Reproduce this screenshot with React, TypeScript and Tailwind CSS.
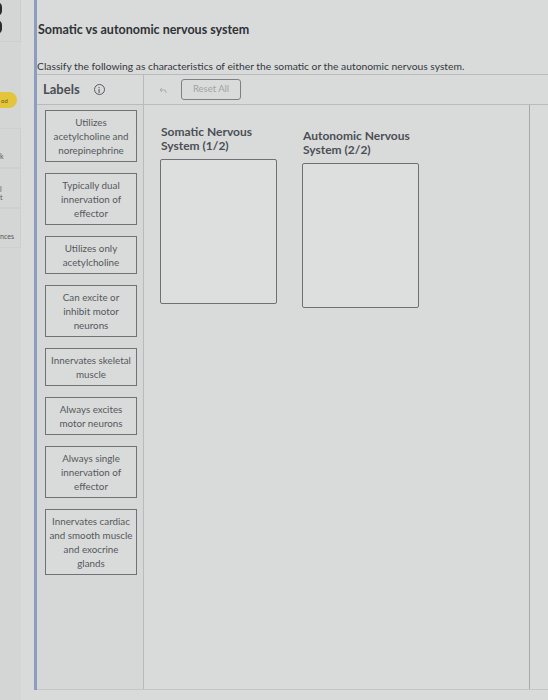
import { ReactNode } from "react";

const labels: string[][] = [
  ["Utilizes", "acetylcholine and", "norepinephrine"],
  ["Typically dual", "innervation of", "effector"],
  ["Utilizes only", "acetylcholine"],
  ["Can excite or", "inhibit motor", "neurons"],
  ["Innervates skeletal", "muscle"],
  ["Always excites", "motor neurons"],
  ["Always single", "innervation of", "effector"],
  ["Innervates cardiac", "and smooth muscle", "and exocrine", "glands"],
];

const font = { fontFamily: "Lato, 'Open Sans', sans-serif" };

function SideCell({ children, className = "" }: { children?: ReactNode; className?: string }) {
  return (
    <div className={`border-y border-r border-[#cdcfce] h-[40px] flex items-end pb-[6px] text-[7px] text-[#555] ${className}`}>
      {children}
    </div>
  );
}

function DropZone({ title, offset }: { title: string[]; offset: string }) {
  return (
    <div className={`flex flex-col ${offset}`}>
      <div className="text-[12px] font-bold leading-[14px] text-[#4b4f55] pl-[1px] h-[34px]">
        {title.map((t) => (
          <div key={t}>{t}</div>
        ))}
      </div>
      <div className="w-[117px] h-[145px] border border-[#6e7173] rounded-[2px] bg-[#dcdfde]" />
    </div>
  );
}

export default function App() {
  return (
    <div className="h-[700px] w-[548px] overflow-hidden flex bg-[#d9dbda]" style={font}>
      {/* left app sidebar, mostly cut off */}
      <div className="w-[21px] flex flex-col shrink-0 bg-[#d4d6d5]">
        <div className="h-[42px] border-b border-r border-[#cdcfce] relative">
          <div className="absolute -left-[8px] top-[2px] w-[10px] h-[14px] rounded-full bg-[#2b2b2b]" />
          <div className="absolute -left-[8px] top-[20px] w-[10px] h-[14px] rounded-full bg-[#2b2b2b]" />
        </div>
        <div className="h-[50px]" />
        <div className="h-[16px] w-[17px] rounded-r-full bg-[#e2c53a] text-[6px] text-[#6a5a10] flex items-center pl-[1px]">
          od
        </div>
        <div className="h-[20px]" />
        <SideCell>k</SideCell>
        <SideCell className="flex-col !items-start justify-end leading-[8px]">
          <span>l</span>
          <span>t</span>
        </SideCell>
        <SideCell className="text-[6px]">nces</SideCell>
      </div>

      <div className="w-[13px] shrink-0" />
      <div className="w-[3px] h-[690px] bg-[#8d9dbd] shrink-0" />

      <div className="flex-1 flex flex-col h-[690px] border-b border-[#c4c6c5]">
        <h1 className="text-[12.5px] font-bold text-[#2f3237] pt-[21px] pl-[1px] h-[52px]">
          Somatic vs autonomic nervous system
        </h1>
        <p className="text-[10.3px] text-[#34373c] h-[22px] pt-[8px] leading-[12px] whitespace-nowrap">
          Classify the following as characteristics of either the somatic or the autonomic nervous system.
        </p>

        <div className="flex h-[31px] border-y border-[#b9bbba]">
          <div className="w-[107px] border-r border-[#b9bbba] flex items-center pl-[6px] gap-[14px]">
            <span className="text-[13px] font-bold text-[#4a4e55]">Labels</span>
            <span className="w-[11px] h-[11px] rounded-full border border-[#555a60] text-[8px] font-bold text-[#555a60] flex items-center justify-center leading-none">
              i
            </span>
          </div>
          <div className="flex items-center pl-[15px] gap-[14px]">
            <svg width="8" height="7" viewBox="0 0 8 7" className="mt-[1px]">
              <path d="M3 1 L1 3 L3 5 M1 3 H5 Q7 3 7 5 V6" fill="none" stroke="#a3a6a8" strokeWidth="0.9" />
            </svg>
            <div className="w-[60px] h-[21px] border border-[#7d8083] rounded-[3px] flex items-center justify-center text-[9.5px] text-[#a0a3a5]">
              Reset All
            </div>
          </div>
        </div>

        <div className="flex flex-1">
          <div className="w-[107px] border-r border-[#b9bbba] bg-[#d6d8d7] flex flex-col gap-[11px] pt-[5px] pl-[8px]">
            {labels.map((lines, i) => (
              <div
                key={i}
                className="w-[92px] border border-[#707376] bg-[#d9dbda] py-[4px] flex flex-col items-center text-[9.8px] leading-[14px] text-[#55585c] whitespace-nowrap"
              >
                {lines.map((l) => (
                  <span key={l}>{l}</span>
                ))}
              </div>
            ))}
          </div>

          <div className="flex-1 flex pt-[20px] pl-[16px] gap-[25px] border-r border-[#a5a8a9] mr-[18px]">
            <DropZone title={["Somatic Nervous", "System (1/2)"]} offset="" />
            <DropZone title={["Autonomic Nervous", "System (2/2)"]} offset="mt-[4px]" />
          </div>
        </div>
      </div>
    </div>
  );
}
